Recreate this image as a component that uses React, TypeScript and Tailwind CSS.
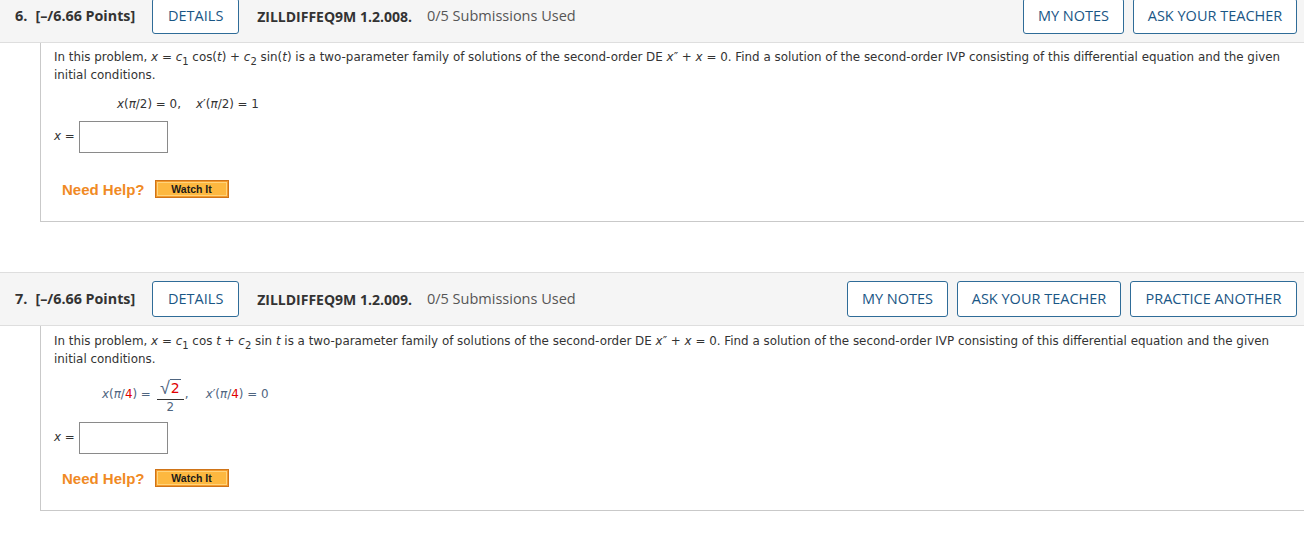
import React from "react";

const headerFont = { fontFamily: '"Open Sans", "Noto Sans", sans-serif' };
const bodyFont = { fontFamily: '"DejaVu Sans", Verdana, sans-serif' };

function Btn({ children, w }: { children: React.ReactNode; w: string }) {
  return (
    <button
      className={`h-9 ${w} flex items-center justify-center border border-[#2f6c98] rounded-[3px] bg-white text-[#1a5685] text-[14.5px] uppercase leading-none`}
    >
      {children}
    </button>
  );
}

function Header({ num, code, practice }: { num: string; code: string; practice?: boolean }) {
  return (
    <div
      className="flex items-center py-2 pl-[15px] pr-[7px] bg-[#f5f5f5] border-y border-[#dedede]"
      style={headerFont}
    >
      <span className="text-[14.5px] font-bold text-[#333]">{num}.</span>
      <span className="ml-[8px] text-[14.3px] font-bold text-[#333]">[–/6.66 Points]</span>
      <div className="ml-[17px]">
        <Btn w="w-[87px]">Details</Btn>
      </div>
      <span className="ml-[18px] text-[14px] font-bold text-[#333]">{code}</span>
      <span className="ml-[15px] text-[14.5px] text-[#555]">0/5 Submissions Used</span>
      <div className="ml-auto flex gap-[9px]">
        <Btn w="w-[101px]">My Notes</Btn>
        <Btn w="w-[164px]">Ask Your Teacher</Btn>
        {practice && <Btn w="w-[167px]">Practice Another</Btn>}
      </div>
    </div>
  );
}

function WatchIt() {
  return (
    <div className="h-[18px] w-[74px] border border-[#cf7418] bg-[#f39a2c] p-[1px]">
      <div className="h-full w-full border border-[#ffd47c] bg-[#fdb840] flex items-center justify-center">
        <span
          className="text-[10.5px] font-bold text-[#1a1a1a] leading-none"
          style={{ fontFamily: '"Liberation Sans", Arial, sans-serif' }}
        >
          Watch It
        </span>
      </div>
    </div>
  );
}

function HelpRow({ mt }: { mt: string }) {
  return (
    <div className={`flex items-center ${mt}`}>
      <span
        className="ml-[8px] text-[15px] font-bold text-[#f08a24] leading-none"
        style={{ fontFamily: '"Liberation Sans", Arial, sans-serif' }}
      >
        Need Help?
      </span>
      <div className="ml-[10px]">
        <WatchIt />
      </div>
    </div>
  );
}

function AnswerRow({ mt }: { mt: string }) {
  return (
    <div className={`flex items-center ${mt}`}>
      <span className="text-[11.9px] text-[#333] w-[25px]">
        <i>x</i> =
      </span>
      <div className="w-[89px] h-[32px] border border-[#8a8a8a] bg-white" />
    </div>
  );
}

const Sub = ({ children }: { children: React.ReactNode }) => (
  <span className="text-[10px] relative top-[4px] leading-none">{children}</span>
);

export default function App() {
  return (
    <div className="w-[1304px] h-[535px] overflow-hidden bg-white">
      <div className="-mt-[11px]">
        <Header num="6" code="ZILLDIFFEQ9M 1.2.008." />
        <div
          className="ml-[40px] border-l border-b border-[#c9c9c9] pl-[13px] pt-[5px] pb-[23px] text-[#333]"
          style={bodyFont}
        >
          <p className="text-[11.9px] leading-[18px]">
            In this problem, <i>x</i> = <i>c</i>
            <Sub>1</Sub> cos(<i>t</i>) + <i>c</i>
            <Sub>2</Sub> sin(<i>t</i>) is a two-parameter family of solutions of the second-order DE <i>x</i>″ +{" "}
            <i>x</i> = 0. Find a solution of the second-order IVP consisting of this differential equation and the
            given initial conditions.
          </p>
          <div className="mt-[11px] ml-[63px] text-[11.9px] leading-[18px]">
            <i>x</i>(<i>π</i>/2) = 0,&nbsp;&nbsp;&nbsp; <i>x</i>′(<i>π</i>/2) = 1
          </div>
          <AnswerRow mt="mt-[8px]" />
          <HelpRow mt="mt-[27px]" />
        </div>

        <div className="mt-[50px]">
          <Header num="7" code="ZILLDIFFEQ9M 1.2.009." practice />
        </div>
        <div
          className="ml-[40px] border-l border-b border-[#c9c9c9] pl-[13px] pt-[6px] pb-[23px] text-[#333]"
          style={bodyFont}
        >
          <p className="text-[11.9px] leading-[18px]">
            In this problem, <i>x</i> = <i>c</i>
            <Sub>1</Sub> cos <i>t</i> + <i>c</i>
            <Sub>2</Sub> sin <i>t</i> is a two-parameter family of solutions of the second-order DE <i>x</i>″ +{" "}
            <i>x</i> = 0. Find a solution of the second-order IVP consisting of this differential equation and the
            given initial conditions.
          </p>
          <div className="mt-[7px] ml-[48px] flex items-center text-[11.9px] text-[#4f6580] leading-[16px]">
            <span>
              <i>x</i>(<i>π</i>/<span className="text-[#e00000]">4</span>) =
            </span>
            <span className="inline-flex flex-col items-center ml-[6px]">
              <span className="h-[24px] flex items-end">
                <span className="text-[18px] leading-[22px] font-light">√</span>
                <span className="border-t border-[#4f6580] text-[#e00000] text-[14px] leading-[17px] px-[1px] mb-[2px]">
                  2
                </span>
              </span>
              <span className="w-[27px] border-t border-[#333]" />
              <span className="h-[13px] leading-[15px]">2</span>
            </span>
            <span className="ml-[1px]">,</span>
            <span className="ml-[17px]">
              <i>x</i>′(<i>π</i>/<span className="text-[#e00000]">4</span>) = 0
            </span>
          </div>
          <AnswerRow mt="mt-[9px]" />
          <HelpRow mt="mt-[15px]" />
        </div>
      </div>
    </div>
  );
}
